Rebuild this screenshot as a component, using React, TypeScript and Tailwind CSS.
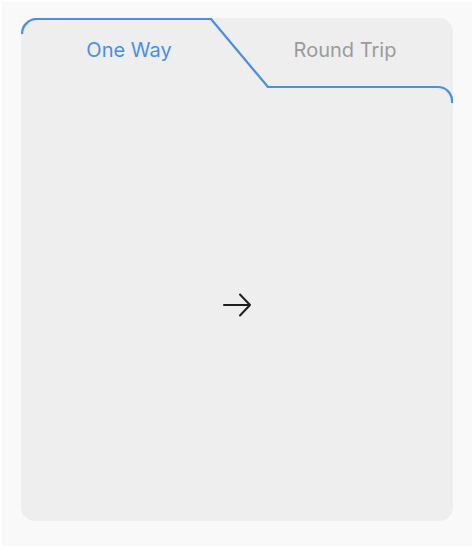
const font = { fontFamily: "Inter, 'Noto Sans', sans-serif" };

function TabOutline() {
  // blue outline that runs along the active tab and drops under the inactive one
  return (
    <svg
      className="absolute left-0 top-0 pointer-events-none"
      width="432"
      height="90"
      viewBox="0 0 432 90"
      fill="none"
    >
      <path
        d="M1 16 A15 15 0 0 1 16 1 L190 1 L247 69 L417 69 A14 14 0 0 1 431 83 L431 85"
        stroke="#4a8fe0"
        strokeWidth="2.2"
        strokeLinejoin="round"
      />
    </svg>
  );
}

function Arrow() {
  return (
    <svg width="30" height="24" viewBox="0 0 30 24" fill="none">
      <path
        d="M2 12 L28 12 M18 1.5 L28 12 L18 22.5"
        stroke="#1f1f1f"
        strokeWidth="2"
        strokeLinecap="round"
        strokeLinejoin="round"
      />
    </svg>
  );
}

export default function App() {
  return (
    <div className="w-[474px] h-[548px] bg-white p-[2px]" style={font}>
      <div className="w-full h-full bg-[#f9f9f9] pl-[19px] pr-[19px] pt-[16px] pb-[25px]">
        <div className="relative w-[432px] h-[503px] bg-[#eeeeee] rounded-[14px] flex flex-col">
          <TabOutline />
          <div className="flex h-[70px]">
            <button className="flex-1 flex items-center justify-center text-[20px] text-[#4a8fe0] pb-[6px]">
              One Way
            </button>
            <button className="flex-1 flex items-center justify-center text-[20px] text-[#9b9b9b] pb-[6px]">
              Round Trip
            </button>
          </div>
          <div className="flex-1 flex items-center justify-center">
            <Arrow />
          </div>
        </div>
      </div>
    </div>
  );
}
